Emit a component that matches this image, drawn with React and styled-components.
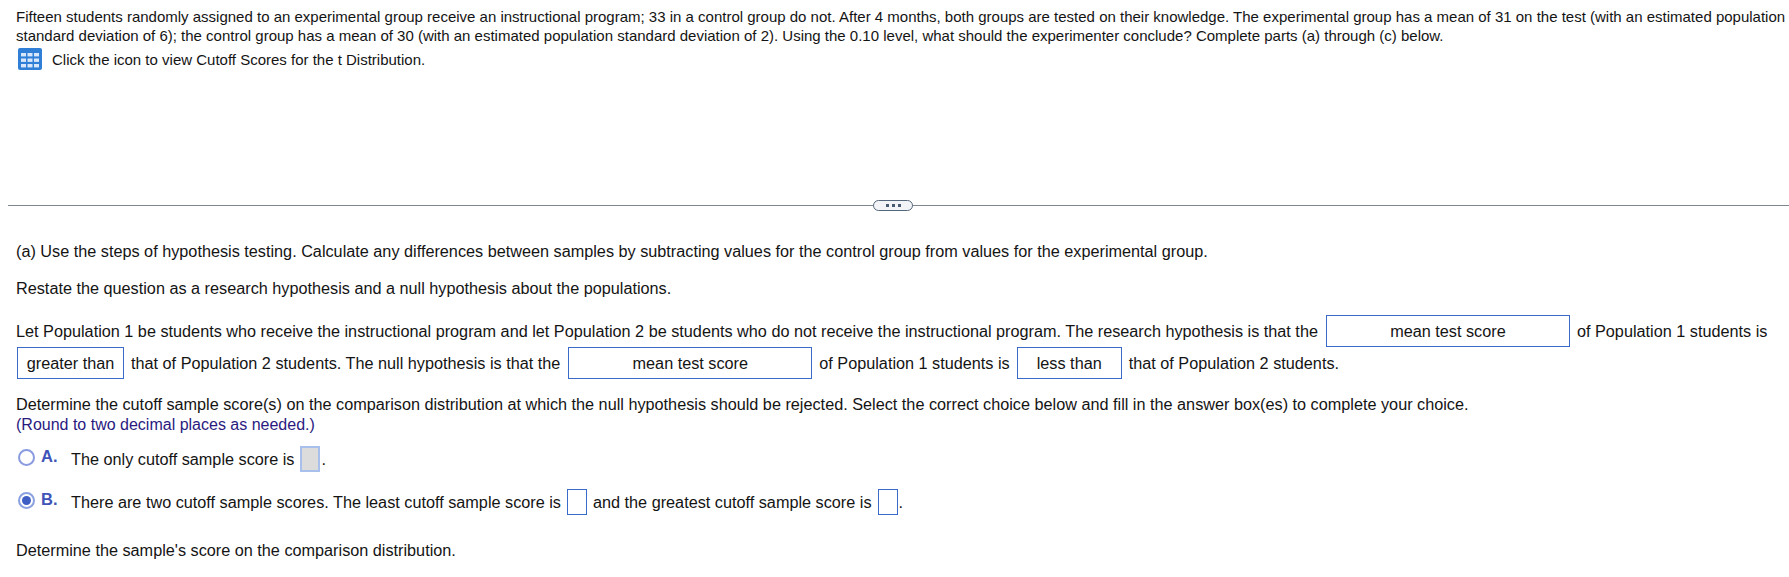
import React from "react";
import styled, { createGlobalStyle } from "styled-components";

const Global = createGlobalStyle`
  html, body { margin: 0; padding: 0; background: #fff; }
  body { font-family: "Liberation Sans", Arial, sans-serif; font-size: 16.24px; color: #141414; overflow: hidden; }
`;
const Page = styled.div`width: 1789px; height: 577px; overflow: hidden;`;
const Intro = styled.section`height: 205px; padding: 7px 0 0 16px; box-sizing: border-box; font-size: 15px;`;
const Para = styled.p`margin: 0; line-height: 19px; white-space: nowrap;`;
const IconRow = styled.div`display: flex; align-items: center; gap: 10px; margin: 3px 0 0 2px; height: 22px;`;
const Divider = styled.div`position: relative; height: 1px; background: #7f8791; margin-left: 8px; `;
const Pill = styled.div`
  position: absolute; left: 865px; top: -5px; width: 40px; height: 11px; box-sizing: border-box;
  border: 1px solid #55677d; border-radius: 6px; background: #f2f4f7;
  display: flex; align-items: center; justify-content: center; gap: 3px;
`;
const Dot = styled.span`width: 3px; height: 3px; background: #4a5a70;`;
const Body = styled.section`padding: 36px 0 0 16px;`;
const Line = styled.div`line-height: 19px; margin-top: ${p => p.$mt || 0}px; white-space: nowrap; display: flex; align-items: center; height: ${p => p.$h || 19}px; color: ${p => p.$color || "inherit"}; font-size: ${p => p.$size || 16.24}px;`;
const Box = styled.span`
  display: inline-flex; align-items: center; justify-content: center; box-sizing: border-box;
  border: ${p => p.$disabled ? "2px solid #a9c0ec" : "1px solid #3a6bc9"}; width: ${p => p.$w}px; height: ${p => p.$h || 32}px; background: ${p => p.$disabled ? "#dcdcdc" : "#fff"};
  margin: 0 ${p => p.$mr ?? 7}px 0 ${p => p.$ml ?? 7}px; flex: none;
`;
const Option = styled.div`display: flex; align-items: center; height: 26px; margin-top: ${p => p.$mt}px; margin-left: 2px; white-space: nowrap;`;
const Radio = styled.span`
  width: 17px; height: 17px; border-radius: 50%; box-sizing: border-box; border: 2px solid ${p => p.$on ? "#8aa0e0" : "#8a9be0"};
  display: flex; align-items: center; justify-content: center; margin-top: -3px; flex: none; background: #fff;
`;
const RadioDot = styled.span`width: 9px; height: 9px; border-radius: 50%; background: #3f5fc4;`;
const Letter = styled.span`font-weight: 700; font-size: 16.5px; color: #3f54b8; width: 36px; padding-left: 6px; box-sizing: border-box; margin-top: -5px; flex: none;`;

const TableIcon = () => (
  <svg width="24" height="22" viewBox="0 0 24 22">
    <rect x="0" y="0" width="24" height="22" rx="2" fill="#2f7fd6" />
    {[5, 10.5, 16].map(y => [3, 9.5, 16].map(x => <rect key={x + "-" + y} x={x} y={y} width="5" height="3.4" fill="#d8e8fa" />))}
  </svg>
);

export default function App() {
  return (
    <Page>
      <Global />
      <Intro>
        <Para>Fifteen students randomly assigned to an experimental group receive an instructional program; 33 in a control group do not. After 4 months, both groups are tested on their knowledge. The experimental group has a mean of 31 on the test (with an estimated population</Para>
        <Para>standard deviation of 6); the control group has a mean of 30 (with an estimated population standard deviation of 2). Using the 0.10 level, what should the experimenter conclude? Complete parts (a) through (c) below.</Para>
        <IconRow><TableIcon />Click the icon to view Cutoff Scores for the t Distribution.</IconRow>
      </Intro>
      <Divider><Pill><Dot /><Dot /><Dot /></Pill></Divider>
      <Body>
        <Line>(a) Use the steps of hypothesis testing. Calculate any differences between samples by subtracting values for the control group from values for the experimental group.</Line>
        <Line $mt={18}>Restate the question as a research hypothesis and a null hypothesis about the populations.</Line>
        <Line $mt={17} $h={32}>Let Population 1 be students who receive the instructional program and let Population 2 be students who do not receive the instructional program. The research hypothesis is that the<Box $w={244} $ml={8}>mean test score</Box>of Population 1 students is</Line>
        <Line $h={32}><Box $w={107} $ml={1}>greater than</Box>that of Population 2 students. The null hypothesis is that the<Box $w={244} $ml={8}>mean test score</Box>of Population 1 students is<Box $w={105}>less than</Box>that of Population 2 students.</Line>
        <Line $mt={16}>Determine the cutoff sample score(s) on the comparison distribution at which the null hypothesis should be rejected. Select the correct choice below and fill in the answer box(es) to complete your choice.</Line>
        <Line $mt={1} $size={16} $color="#2a1a80">(Round to two decimal places as needed.)</Line>
        <Option $mt={12}><Radio /><Letter>A.</Letter>The only cutoff sample score is<Box $w={20} $h={26} $disabled $mr={1} $ml={6} />.</Option>
        <Option $mt={17}><Radio $on><RadioDot /></Radio><Letter>B.</Letter>There are two cutoff sample scores. The least cutoff sample score is<Box $w={20} $h={26} $ml={6} $mr={6} />and the greatest cutoff sample score is<Box $w={20} $h={26} $ml={6} $mr={1} />.</Option>
        <Line $mt={26}>Determine the sample's score on the comparison distribution.</Line>
      </Body>
    </Page>
  );
}
